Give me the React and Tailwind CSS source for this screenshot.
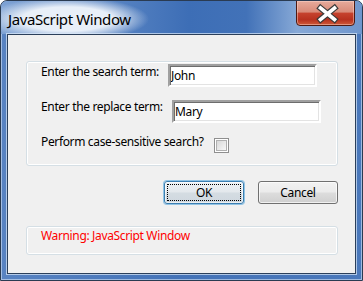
import React from "react";

function CloseIcon() {
  return (
    <svg width="59" height="25" viewBox="0 0 59 25" className="absolute left-0 top-0">
      <path d="M23.5 7 L37.5 18.5 M37.5 7 L23.5 18.5" stroke="#3a3a3a" strokeWidth="6" strokeLinecap="square" fill="none" />
      <path d="M23.5 7 L37.5 18.5 M37.5 7 L23.5 18.5" stroke="#ffffff" strokeWidth="3.6" strokeLinecap="square" fill="none" />
    </svg>
  );
}

const inputCls =
  "h-[23px] w-[149px] border-2 border-t-[#a0a0a0] border-l-[#a0a0a0] border-b-white border-r-white bg-white shadow-[inset_1px_1px_0_#6d6d6d,inset_-1px_-1px_0_#e3e3e3] px-[1px] text-[12px] leading-[19px] tracking-[-0.35px] text-black outline-none";

export default function App() {
  return (
    <div
      className="relative flex h-[281px] w-[363px] flex-col overflow-hidden rounded-t-[7px] border border-[#2a3b52] bg-[linear-gradient(90deg,#5883c2_0%,#4473b8_50%,#4a78bb_100%)] shadow-[inset_0_0_0_1px_rgba(215,230,248,0.6)]"
      style={{ fontFamily: '"Noto Sans", "Open Sans", sans-serif' }}
    >
      <div className="h-[33px] shrink-0 bg-[radial-gradient(ellipse_82px_22px_at_66px_18px,rgba(232,239,248,1)_55%,rgba(232,239,248,0)_100%),linear-gradient(90deg,#7ea2d4_0%,#3d6eb6_52%,#4272b8_68%,#86a8d6_82%,#6f96cd_100%)] pl-[7px] pt-[6px]">
        <span className="whitespace-nowrap text-[15px] leading-[20px] tracking-[-0.4px] text-black">JavaScript Window</span>
      </div>
      <div className="absolute right-[7px] top-[-1px] h-[26px] w-[59px] overflow-hidden rounded-b-[4px] border border-[#4e1a12] bg-[linear-gradient(180deg,#e6ab9c_0%,#d98b79_45%,#c5412d_52%,#b7311f_78%,#cf5a38_100%)] shadow-[inset_0_0_0_1px_rgba(255,220,210,0.45)]">
        <CloseIcon />
      </div>

      <div className="mx-[6px] mb-[6px] flex flex-1 flex-col border border-[#2b3f5a] bg-[#f0f0f0] shadow-[0_0_0_1px_rgba(220,234,250,0.7)]">
        <div className="ml-[18px] mr-[17px] mt-[26px] h-[105px] whitespace-nowrap rounded-[3px] border border-[#d5dfe5] pl-[14px] pt-[2px] text-[12px] leading-[16px] tracking-[-0.35px] text-black shadow-[inset_0_0_0_1px_#ffffff]">
          <div className="flex h-[23px] items-start">
            <span className="w-[127px] shrink-0">Enter the search term:</span>
            <input className={inputCls} defaultValue="John" />
          </div>
          <div className="mt-[13px] flex h-[23px] items-start">
            <span className="-mt-[1px] w-[131px] shrink-0">Enter the replace term:</span>
            <input className={inputCls} defaultValue="Mary" />
          </div>
          <div className="mt-[11px] flex items-start">
            <span className="w-[173px] shrink-0">Perform case-sensitive search?</span>
            <div className="mt-[4px] flex h-[15px] w-[15px] items-center justify-center border border-[#8f8f8f] bg-white">
              <div className="h-[11px] w-[11px] border border-[#b0b0b0] bg-[linear-gradient(135deg,#d8d8d8,#f7f7f7)]" />
            </div>
          </div>
        </div>

        <div className="mr-[17px] mt-[15px] flex justify-end gap-[14px] text-[12px] tracking-[-0.35px] text-black">
          <button className="relative flex h-[23px] w-[80px] items-center justify-center rounded-[3px] border border-[#3c7fb1] bg-[linear-gradient(180deg,#eef2f5_0%,#e3e8ec_48%,#d4dce2_52%,#cfd8df_100%)] shadow-[0_0_0_1px_rgba(70,160,220,0.55),inset_0_0_0_1px_rgba(255,255,255,0.6)]">
            <span className="pointer-events-none absolute inset-[2px] border border-dotted border-black" />
            <span className="leading-[16px]">OK</span>
          </button>
          <button className="flex h-[23px] w-[80px] items-center justify-center rounded-[3px] border border-[#707070] bg-[linear-gradient(180deg,#f2f2f2_0%,#ebebeb_48%,#dddddd_52%,#cfcfcf_100%)] shadow-[inset_0_0_0_1px_rgba(255,255,255,0.7)]">
            <span className="leading-[16px]">Cancel</span>
          </button>
        </div>

        <div className="ml-[18px] mr-[17px] mt-[22px] h-[29px] whitespace-nowrap rounded-[3px] border border-[#d5dfe5] pl-[14px] pt-[1px] text-[12px] leading-[16px] tracking-[-0.35px] text-[#ff0000] shadow-[inset_0_0_0_1px_#ffffff]">
          Warning: JavaScript Window
        </div>
      </div>
    </div>
  );
}
